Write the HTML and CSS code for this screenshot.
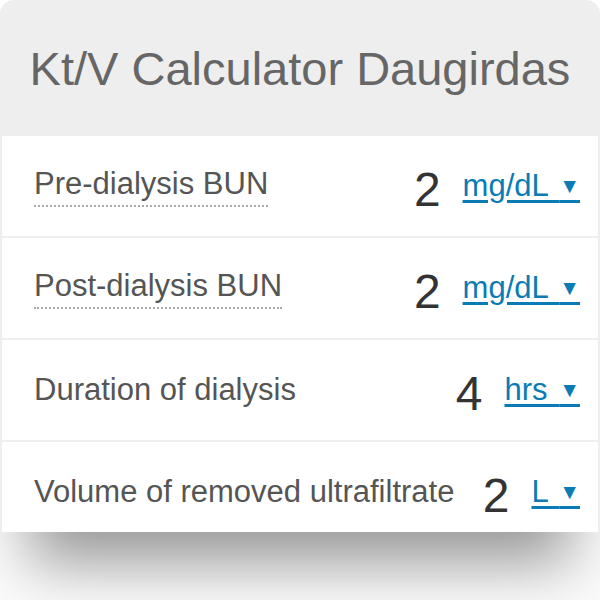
FILE: index.html
```html
<!DOCTYPE html>
<html lang="en">
<head>
    <meta charset="UTF-8">
    <title>Kt/V Calculator Daugirdas</title>
    <link rel="stylesheet" href="styles.css">
</head>
<body>
    <div class="card">
        <header class="card-header">
            <h1>Kt/V Calculator Daugirdas</h1>
        </header>

        <div class="row">
            <span class="label has-tip">Pre-dialysis BUN</span>
            <span class="value">2</span>
            <span class="unit">mg/dL <span class="caret">&#9660;</span></span>
        </div>
        <div class="row">
            <span class="label has-tip">Post-dialysis BUN</span>
            <span class="value">2</span>
            <span class="unit">mg/dL <span class="caret">&#9660;</span></span>
        </div>
        <div class="row">
            <span class="label">Duration of dialysis</span>
            <span class="value">4</span>
            <span class="unit">hrs <span class="caret">&#9660;</span></span>
        </div>
        <div class="row">
            <span class="label">Volume of removed ultrafiltrate</span>
            <span class="value">2</span>
            <span class="unit">L <span class="caret">&#9660;</span></span>
        </div>
    </div>
    <div class="shade"></div>
</body>
</html>
```

FILE: styles.css
```css
body {
    margin: 0;
    padding: 0;
    background-color: #fff;
    font-family: "Liberation Sans", Arial, sans-serif;
}
.card {
    width: 596px;
    height: 532px;
    padding: 0 2px;
    background-color: #eee;
    border-radius: 14px 14px 0 0;
    overflow: hidden;
}
.card-header {
    height: 136px;
    display: flex;
    align-items: center;
    justify-content: center;
}
.card-header h1 {
    margin: 0;
    font-size: 47px;
    font-weight: normal;
    color: #666;
}
.row {
    height: 100px;
    margin-bottom: 2px;
    padding: 0 18px 0 32px;
    display: flex;
    align-items: center;
    background-color: #fff;
}
.label {
    flex: 1;
    font-size: 31px;
    color: #555;
}
.has-tip {
    flex: none;
    padding-bottom: 3px;
    border-bottom: 2px dotted #aaa;
    margin-right: auto;
}
.value {
    font-size: 48px;
    color: #333;
    margin-right: 22px;
    padding-top: 6px;
}
.unit {
    font-size: 31px;
    color: #0a7bb5;
    text-decoration: underline;
    text-underline-offset: 4px;
    word-spacing: 3px;
}
.caret {
    font-size: 21px;
    vertical-align: 3px;
}
/* soft shadow under the cut-off card */
.shade {
    position: relative;
    height: 68px;
    overflow: hidden;
    background-color: #fafafa;
}
.shade::before {
    content: "";
    position: absolute;
    left: 60px;
    right: 60px;
    top: -40px;
    height: 40px;
    box-shadow: 0 0 60px 30px rgba(0, 0, 0, 0.4);
}
```
